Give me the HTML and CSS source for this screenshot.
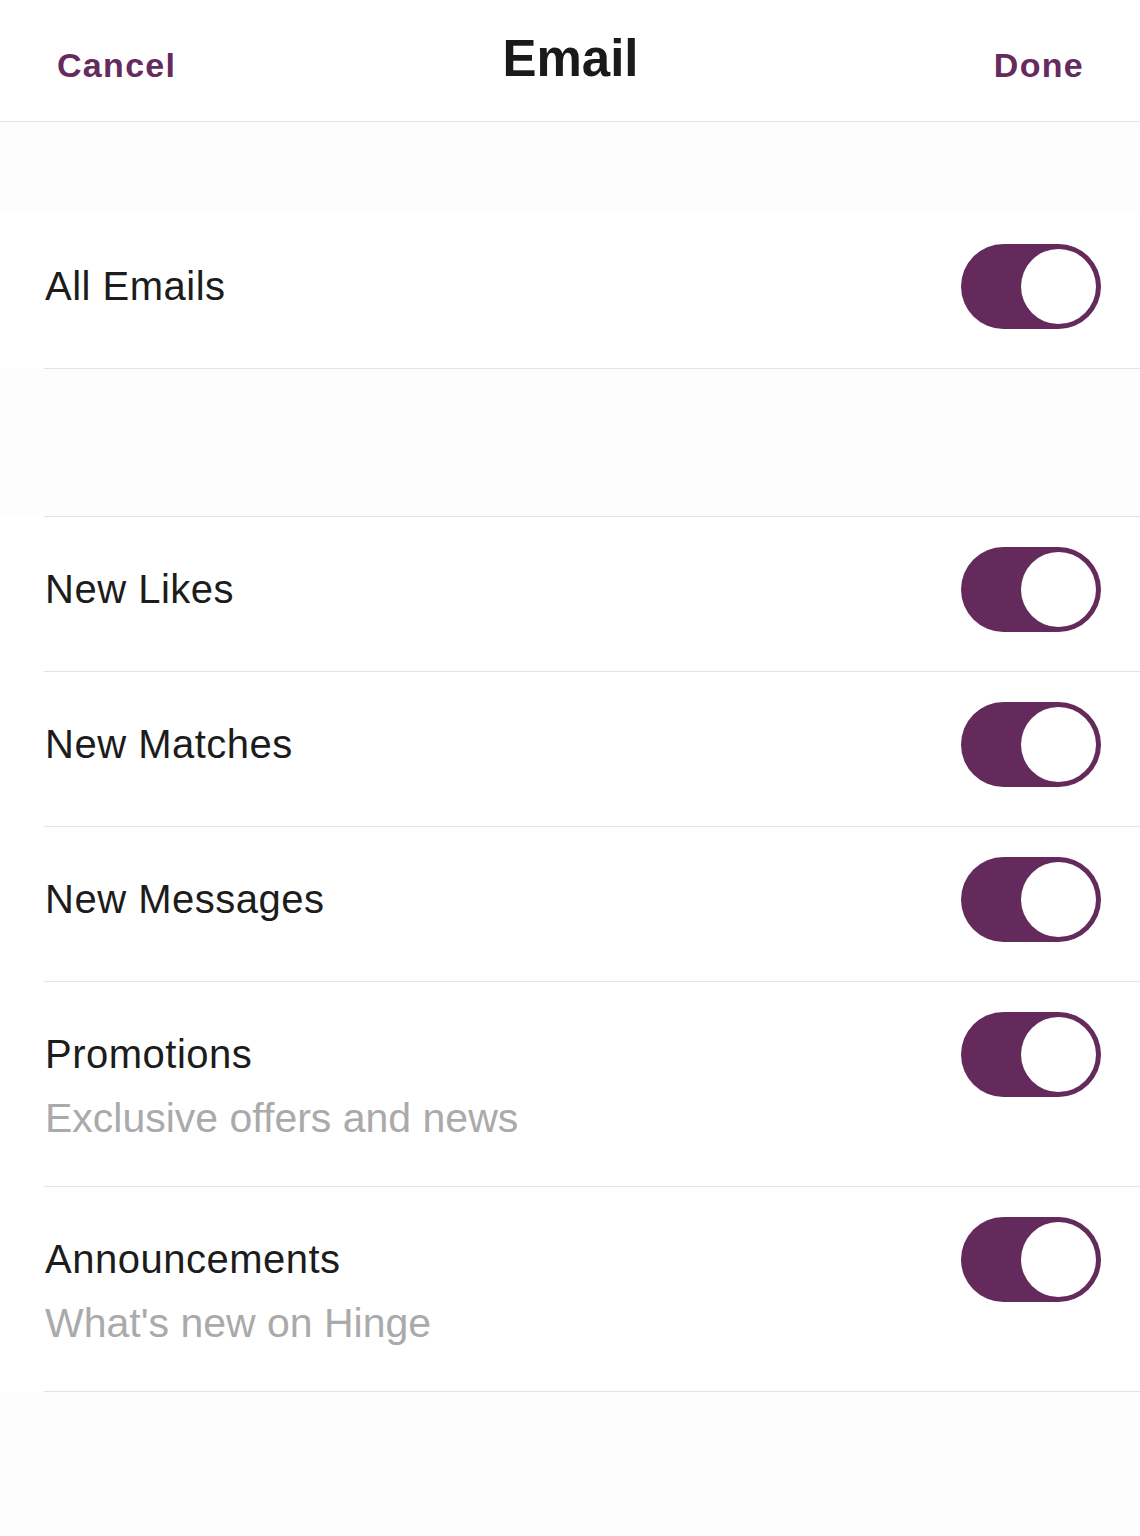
FILE: index.html
```html
<!DOCTYPE html>
<html>
	<head>
		<meta charset="utf-8" />
		<title>Email</title>
		<link rel="stylesheet" href="styles.css">
	</head>
	<body>
		<header class="nav">
			<a class="nav-btn nav-left">Cancel</a>
			<h1 class="nav-title">Email</h1>
			<a class="nav-btn nav-right">Done</a>
		</header>

		<div class="spacer spacer-top"></div>

		<section class="list">
			<div class="row">
				<div class="label">
					<div class="label-title">All Emails</div>
				</div>
				<span class="toggle on"><span class="knob"></span></span>
			</div>
		</section>

		<div class="spacer spacer-mid"></div>

		<section class="list">
			<div class="rows">
				<div class="row">
					<div class="label">
						<div class="label-title">New Likes</div>
					</div>
					<span class="toggle on"><span class="knob"></span></span>
				</div>
				<div class="row">
					<div class="label">
						<div class="label-title">New Matches</div>
					</div>
					<span class="toggle on"><span class="knob"></span></span>
				</div>
				<div class="row">
					<div class="label">
						<div class="label-title">New Messages</div>
					</div>
					<span class="toggle on"><span class="knob"></span></span>
				</div>
				<div class="row tall">
					<div class="label">
						<div class="label-title">Promotions</div>
						<div class="label-sub">Exclusive offers and news</div>
					</div>
					<span class="toggle on"><span class="knob"></span></span>
				</div>
				<div class="row tall">
					<div class="label">
						<div class="label-title">Announcements</div>
						<div class="label-sub">What's new on Hinge</div>
					</div>
					<span class="toggle on"><span class="knob"></span></span>
				</div>
			</div>
		</section>
	</body>
</html>
```

FILE: styles.css
```css
body {
	margin: 0;
	background: #fdfdfd;
	font-family: "Liberation Sans", Arial, sans-serif;
	color: #1c1c1c;
}

/* top bar */
.nav {
	display: grid;
	grid-template-columns: 1fr auto 1fr;
	align-items: center;
	height: 121px;
	padding: 0 56px 0 57px;
	background: #fff;
	border-bottom: 1px solid #e4e4e4;
}
.nav-btn {
	margin-top: 8px;
	font-size: 34px;
	font-weight: 700;
	letter-spacing: 1.3px;
	line-height: 40px;
	color: #652b5e;
	cursor: pointer;
}
.nav-left { justify-self: start; }
.nav-right { justify-self: end; }
.nav-title {
	margin: 0 0 4px 0;
	font-size: 51px;
	font-weight: 700;
	line-height: 56px;
	color: #1a1a1a;
}

/* gaps between groups */
.spacer-top { height: 92px; }
.spacer-mid { height: 147px; }

/* lists */
.list {
	background: #fff;
	padding-left: 44px;
}
.rows {
	border-top: 1px solid #e4e4e4;
}
.row {
	display: flex;
	justify-content: space-between;
	align-items: flex-start;
	height: 154px;
	padding-right: 39px;
	border-bottom: 1px solid #e4e4e4;
}
.row.tall { height: 204px; }

.label {
	margin-top: 48px;
	padding-left: 1px;
}
.label-title {
	font-size: 40px;
	letter-spacing: 0.5px;
	line-height: 48px;
	color: #1c1c1c;
}
.label-sub {
	margin-top: 16px;
	font-size: 41px;
	line-height: 48px;
	color: #aaaaaa;
}

/* switch */
.toggle {
	display: flex;
	align-items: center;
	box-sizing: border-box;
	width: 140px;
	height: 85px;
	margin-top: 30px;
	padding: 5px;
	border-radius: 43px;
	background: #e6e6e6;
}
.toggle.on {
	justify-content: flex-end;
	background: #632a5b;
}
.knob {
	width: 75px;
	height: 75px;
	border-radius: 50%;
	background: #fff;
}
```
